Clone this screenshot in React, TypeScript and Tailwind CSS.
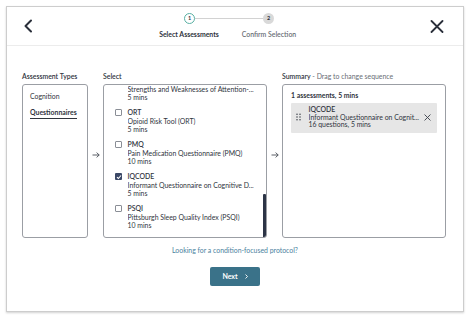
import React from "react";

const library = [
  { code: "GAD-7", name: "Generalized Anxiety Disorder 7-item (GAD-7)", mins: 3 },
  { code: "PHQ-9", name: "Patient Health Questionnaire (PHQ-9)", mins: 5 },
  { code: "SWAN", name: "Strengths and Weaknesses of Attention-...", mins: 5 },
  { code: "ORT", name: "Opioid Risk Tool (ORT)", mins: 5 },
  { code: "PMQ", name: "Pain Medication Questionnaire (PMQ)", mins: 10 },
  { code: "IQCODE", name: "Informant Questionnaire on Cognitive D...", mins: 5, checked: true },
  { code: "PSQI", name: "Pittsburgh Sleep Quality Index (PSQI)", mins: 10 },
];

function Arrow() {
  return (
    <svg width="8" height="6" viewBox="0 0 8 6" fill="none" stroke="#4a4f57" strokeWidth="0.9">
      <path d="M0.5 3 H7.2 M4.6 0.6 L7.2 3 L4.6 5.4" />
    </svg>
  );
}

function Checkbox({ checked }: { checked?: boolean }) {
  if (checked) {
    return (
      <span className="flex h-[7px] w-[7px] shrink-0 items-center justify-center rounded-[1px] bg-[#3b4866]">
        <svg width="6" height="6" viewBox="0 0 6 6" fill="none" stroke="white" strokeWidth="1.1">
          <path d="M1 3.1 L2.4 4.5 L5 1.5" />
        </svg>
      </span>
    );
  }
  return <span className="h-[7px] w-[7px] shrink-0 rounded-[1px] border border-[#8a8e96] bg-white" />;
}

export default function App() {
  return (
    <div className="h-[323px] w-[474px] bg-white px-[6px] pt-[6px] font-['Lato',sans-serif] text-[#2f343d]">
      <div className="h-[306px] w-[458px] border border-[#cdcdcd] bg-white shadow-[0_1px_2px_rgba(0,0,0,0.18)]">
        {/* header */}
        <div className="flex h-[39px] items-center border-b border-[#ececec] pl-[16px] pr-[19px]">
          <div className="flex flex-1">
            <svg width="10" height="14" viewBox="0 0 10 14" fill="none" stroke="#2a2f3a" strokeWidth="2" strokeLinecap="round" strokeLinejoin="round">
              <path d="M8 1.5 L2.5 7 L8 12.5" />
            </svg>
          </div>
          <div className="mr-[9px] flex flex-col items-center">
            <div className="flex items-center">
              <span className="flex h-[11px] w-[11px] items-center justify-center rounded-full border border-[#58b0a3] bg-white text-[5.5px] font-bold leading-[7px]">
                1
              </span>
              <span className="h-px w-[68px] bg-[#d2d2d2]" />
              <span className="flex h-[11px] w-[11px] items-center justify-center rounded-full bg-[#d9d9d9] text-[5.5px] font-bold leading-[7px]">
                2
              </span>
            </div>
            <div className="mt-[6px] flex text-[6.9px] leading-[9px]">
              <span className="w-[80px] text-center font-bold text-[#2f343d]">Select Assessments</span>
              <span className="w-[80px] text-center font-semibold text-[#6a6e75]">Confirm Selection</span>
            </div>
          </div>
          <div className="flex flex-1 justify-end">
            <svg width="14" height="13" viewBox="0 0 14 13" fill="none" stroke="#2a2f3a" strokeWidth="1.8" strokeLinecap="round">
              <path d="M1.5 1 L12.5 12 M12.5 1 L1.5 12" />
            </svg>
          </div>
        </div>

        {/* body */}
        <div className="flex flex-col items-center">
          <div className="flex w-full items-start pl-[15px] pt-[25.5px] text-[6.9px]">
            <div className="flex w-[66px] flex-col">
              <div className="mb-[3.5px] font-semibold leading-[9px]">Assessment Types</div>
              <div className="flex h-[154px] flex-col items-start rounded-[3px] border border-[#9b9ea4] px-[7px] pt-[6.5px] leading-[9px]">
                <span>Cognition</span>
                <span className="mt-[7px] border-b-[1.3px] border-[#2f343d] pb-[1px] font-bold">Questionnaires</span>
              </div>
            </div>

            <div className="flex w-[15px] items-center justify-center self-stretch">
              <Arrow />
            </div>

            <div className="flex w-[164px] flex-col">
              <div className="mb-[3.5px] font-semibold leading-[9px]">Select</div>
              <div className="relative flex h-[154px] flex-col justify-end overflow-hidden rounded-[3px] border border-[#9b9ea4] pb-[4px]">
                {library.map((a) => (
                  <div key={a.code} className="flex shrink-0 items-start gap-[5.5px] py-[3.4px] pl-[11px] leading-[8.4px]">
                    <div className="flex h-[8.4px] items-center">
                      <Checkbox checked={a.checked} />
                    </div>
                    <div className="flex w-[130px] flex-col">
                      <span className="font-semibold">{a.code}</span>
                      <span className="truncate">{a.name}</span>
                      <span>{a.mins} mins</span>
                    </div>
                  </div>
                ))}
                <div className="absolute bottom-0 right-0 h-[43px] w-[3px] rounded-t-[1px] bg-[#2c3446]" />
              </div>
            </div>

            <div className="flex w-[15px] items-center justify-center self-stretch">
              <Arrow />
            </div>

            <div className="flex w-[164px] flex-col">
              <div className="mb-[3.5px] leading-[9px]">
                <span className="font-semibold">Summary</span>
                <span className="text-[#6a6e75]"> - Drag to change sequence</span>
              </div>
              <div className="h-[154px] rounded-[3px] border border-[#9b9ea4] px-[8px] pt-[5.5px]">
                <div className="font-bold leading-[9px]">1 assessments, 5 mins</div>
                <div className="mt-[3px] flex items-center rounded-[1px] bg-[#e6e6e6] pb-[4.5px] pl-[5px] pr-[6px] pt-[3.5px] leading-[7.6px]">
                  <svg width="5" height="8" viewBox="0 0 5 8" fill="#3a3f48">
                    <circle cx="1" cy="1.2" r="0.75" />
                    <circle cx="4" cy="1.2" r="0.75" />
                    <circle cx="1" cy="4" r="0.75" />
                    <circle cx="4" cy="4" r="0.75" />
                    <circle cx="1" cy="6.8" r="0.75" />
                    <circle cx="4" cy="6.8" r="0.75" />
                  </svg>
                  <div className="ml-[7.5px] flex min-w-0 flex-1 flex-col">
                    <span className="font-semibold">IQCODE</span>
                    <span className="truncate">Informant Questionnaire on Cognit...</span>
                    <span>16 questions, 5 mins</span>
                  </div>
                  <svg width="7" height="7" viewBox="0 0 7 7" fill="none" stroke="#3a3f48" strokeWidth="0.9" strokeLinecap="round">
                    <path d="M0.8 0.8 L6.2 6.2 M6.2 0.8 L0.8 6.2" />
                  </svg>
                </div>
              </div>
            </div>
          </div>

          <a className="mt-[8px] text-[6.9px] leading-[9px] text-[#4a7f9e]">Looking for a condition-focused protocol?</a>

          <button className="mt-[11.5px] flex h-[19px] w-[50px] items-center justify-center gap-[7px] rounded-[2px] bg-[#3a7289] text-[7px] font-bold text-white">
            <span>Next</span>
            <svg width="3" height="5" viewBox="0 0 3 5" fill="none" stroke="white" strokeWidth="0.9">
              <path d="M0.5 0.5 L2.5 2.5 L0.5 4.5" />
            </svg>
          </button>
        </div>
      </div>
    </div>
  );
}
